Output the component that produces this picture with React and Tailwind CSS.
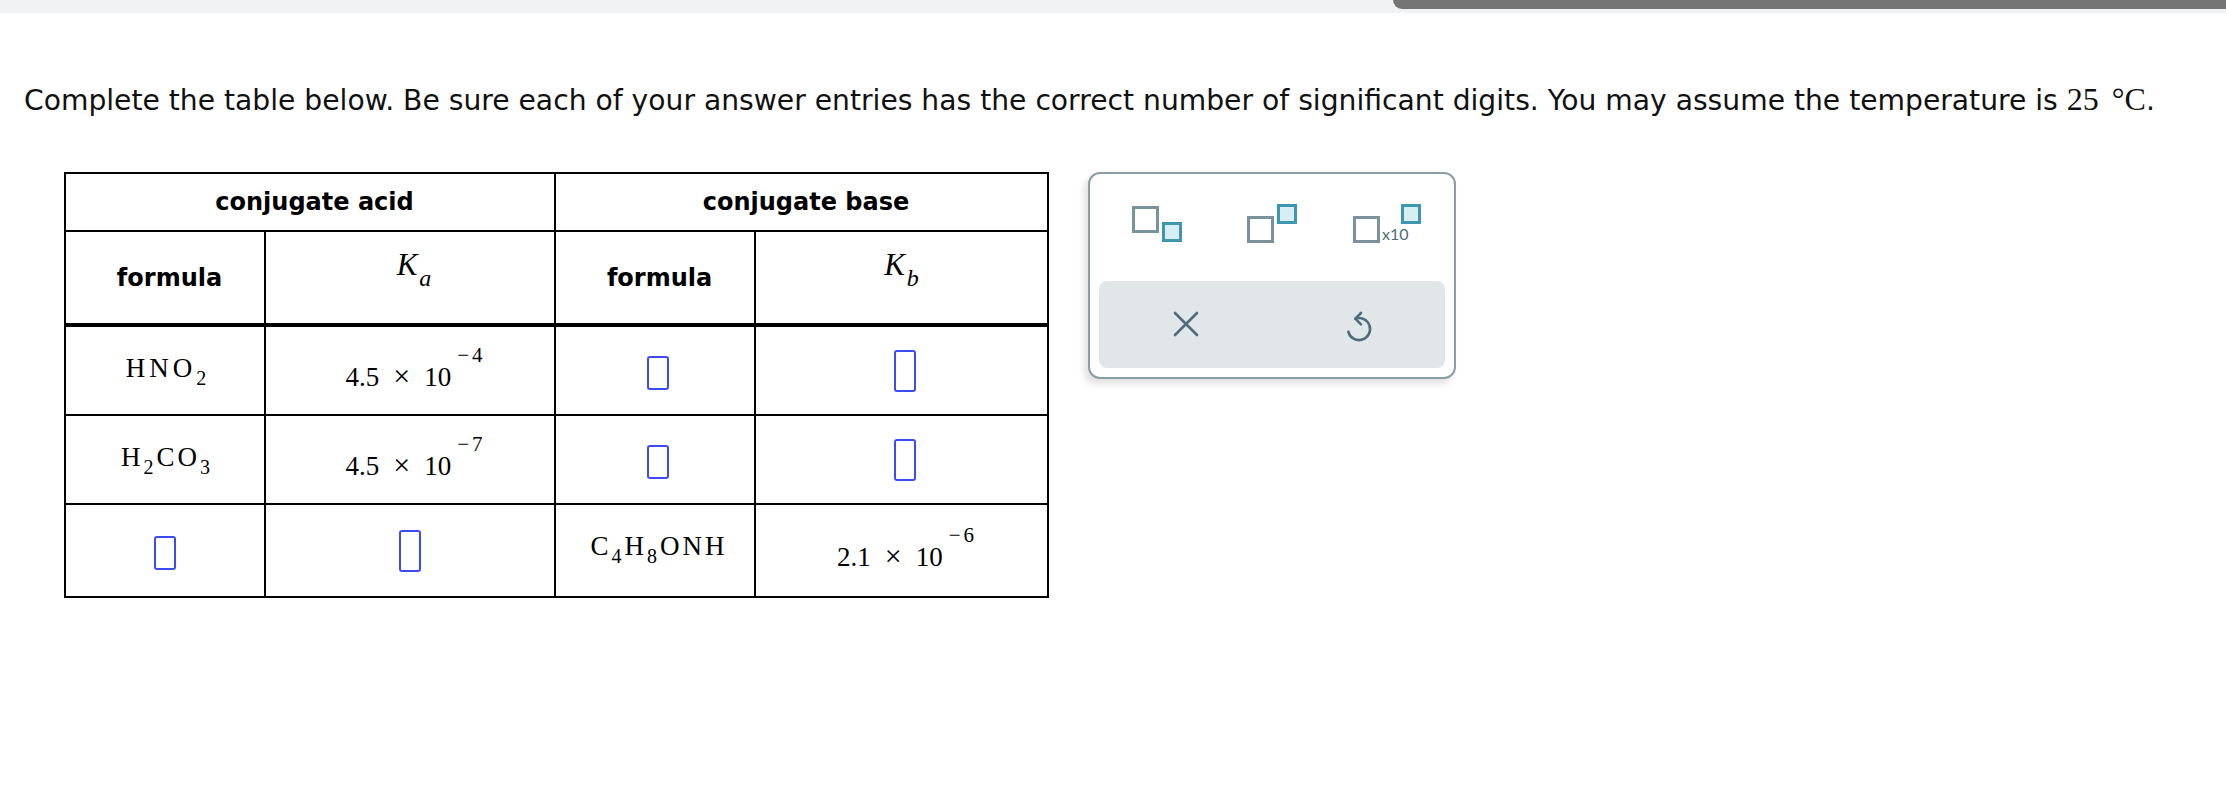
import React from 'react';

const sans = "font-['DejaVu_Sans','Verdana',sans-serif]";
const serif = "font-['Liberation_Serif','Times_New_Roman',serif]";

function Blank({ tall }) {
  return (
    <span
      className={`inline-block w-[22px] ${tall ? 'h-[42px]' : 'h-[34px]'} border-2 border-[#3d4cf0] rounded-[3px] align-middle`}
    />
  );
}

function Sci({ m, e }) {
  return (
    <span className={`${serif} text-[27px] whitespace-nowrap text-black relative top-[-2px] ml-[8px]`}>
      {m}
      <span className="mx-[14px] text-[30px]">×</span>
      10
      <span className="ml-[6px] text-[21px] align-[24px]">
        <span className="mr-[3px]">−</span>
        {e}
      </span>
    </span>
  );
}

function Sub({ children }) {
  return <sub className="text-[20px] bottom-[-8px] tracking-normal mr-[3px]">{children}</sub>;
}

function SubscriptIcon() {
  return (
    <svg width="50" height="36" viewBox="0 0 50 36">
      <rect x="1.5" y="1.5" width="24" height="24" fill="white" stroke="#7a929c" strokeWidth="3" />
      <rect x="31.5" y="17.5" width="17" height="17" fill="#d6eef4" stroke="#3d97b1" strokeWidth="3" />
    </svg>
  );
}

function SuperscriptIcon() {
  return (
    <svg width="50" height="39" viewBox="0 0 50 39">
      <rect x="1.5" y="13.5" width="24" height="24" fill="white" stroke="#7a929c" strokeWidth="3" />
      <rect x="31.5" y="1.5" width="17" height="17" fill="#d6eef4" stroke="#3d97b1" strokeWidth="3" />
    </svg>
  );
}

function TimesTenIcon() {
  return (
    <svg width="68" height="39" viewBox="0 0 68 39">
      <rect x="1.5" y="13.5" width="24" height="24" fill="white" stroke="#7a929c" strokeWidth="3" />
      <text x="29" y="36" fontSize="16" fill="#4f6c7a" fontFamily="Lato, 'Open Sans', sans-serif">x10</text>
      <rect x="49.5" y="1.5" width="17" height="17" fill="#d6eef4" stroke="#3d97b1" strokeWidth="3" />
    </svg>
  );
}

function ClearIcon() {
  return (
    <svg width="26" height="26" viewBox="0 0 26 26" fill="none" stroke="#4f6c7a" strokeWidth="2.6" strokeLinecap="round">
      <path d="M2 2 L24 24 M24 2 L2 24" />
    </svg>
  );
}

function UndoIcon() {
  return (
    <svg width="28" height="37" viewBox="0 0 28 37" fill="none" stroke="#4f6c7a" strokeWidth="2.6" strokeLinecap="round" strokeLinejoin="round">
      <path d="M16 7 L10.3 12.7 L16 18.4" />
      <path d="M10.3 12.7 A11 11 0 1 1 3.4 25.8" />
    </svg>
  );
}

export default function App() {
  const cell = 'border-2 border-black text-center align-middle p-0';
  const head = `${cell} ${sans} font-bold text-[24px] text-black pl-[9px]`;

  return (
    <div className="min-h-screen bg-white">
      {/* top strip */}
      <div className="h-[13px] bg-[#f1f2f4] flex justify-end">
        <div className="w-[833px] h-[9px] bg-[#757575] rounded-bl-[9px]" />
      </div>

      <p className={`${sans} text-[28.2px] leading-[34px] text-[#111] mt-[69px] ml-[24px] whitespace-nowrap`}>
        Complete the table below. Be sure each of your answer entries has the correct number of significant digits. You may assume the temperature is{' '}
        <span className={`${serif} text-[32px]`}>
          25<span className="ml-[13px]">°C</span>
        </span>
        .
      </p>

      <div className="flex items-start gap-[39px] mt-[54px] ml-[64px]">
        <table className="border-collapse border-2 border-black w-[983px] table-fixed">
          <colgroup>
            <col className="w-[200px]" />
            <col className="w-[290px]" />
            <col className="w-[200px]" />
            <col className="w-[293px]" />
          </colgroup>
          <thead>
            <tr className="h-[58px]">
              <th colSpan={2} className={head}>conjugate acid</th>
              <th colSpan={2} className={head}>conjugate base</th>
            </tr>
            <tr className="h-[94px]">
              <th className={`${head} border-b-4`}>formula</th>
              <th className={`${cell} border-b-4 font-normal`}>
                <span className={`${serif} italic text-[31px] text-black relative top-[-12px] ml-[8px]`}>
                  K<span className="text-[24px] relative top-[11px] ml-[2px]">a</span>
                </span>
              </th>
              <th className={`${head} border-b-4`}>formula</th>
              <th className={`${cell} border-b-4 font-normal`}>
                <span className={`${serif} italic text-[31px] text-black relative top-[-12px]`}>
                  K<span className="text-[24px] relative top-[11px] ml-[2px]">b</span>
                </span>
              </th>
            </tr>
          </thead>
          <tbody className={`${serif} text-[27px] text-black`}>
            <tr className="h-[90px]">
              <td className={cell}>
                <span className="tracking-[4px] relative top-[-2px] pl-[5px]">HNO<Sub>2</Sub></span>
              </td>
              <td className={cell}><Sci m="4.5" e="4" /></td>
              <td className={cell}><span className="ml-[6px]"><Blank /></span></td>
              <td className={cell}><span className="ml-[6px]"><Blank tall /></span></td>
            </tr>
            <tr className="h-[89px]">
              <td className={cell}>
                <span className="tracking-[3px] relative top-[-2px] pl-[4px]">H<Sub>2</Sub>CO<Sub>3</Sub></span>
              </td>
              <td className={cell}><Sci m="4.5" e="7" /></td>
              <td className={cell}><span className="ml-[6px]"><Blank /></span></td>
              <td className={cell}><span className="ml-[6px]"><Blank tall /></span></td>
            </tr>
            <tr className="h-[93px]">
              <td className={cell}><Blank /></td>
              <td className={cell}><Blank tall /></td>
              <td className={cell}>
                <span className="tracking-[3px] relative top-[-4px] pl-[8px]">C<Sub>4</Sub>H<Sub>8</Sub>ONH</span>
              </td>
              <td className={cell}><Sci m="2.1" e="6" /></td>
            </tr>
          </tbody>
        </table>

        {/* answer palette */}
        <div className="w-[368px] h-[207px] border-2 border-[#8a9ea8] rounded-[12px] p-[9px] flex flex-col gap-[16px] bg-white shadow-[-4px_5px_7px_rgba(0,0,0,0.12)]">
          <div className="grid grid-cols-3 items-center justify-items-center h-[82px]">
            <SubscriptIcon />
            <SuperscriptIcon />
            <TimesTenIcon />
          </div>
          <div className="h-[88px] rounded-[8px] bg-[#e1e6e9] grid grid-cols-2 items-center justify-items-center">
            <ClearIcon />
            <UndoIcon />
          </div>
        </div>
      </div>
    </div>
  );
}
